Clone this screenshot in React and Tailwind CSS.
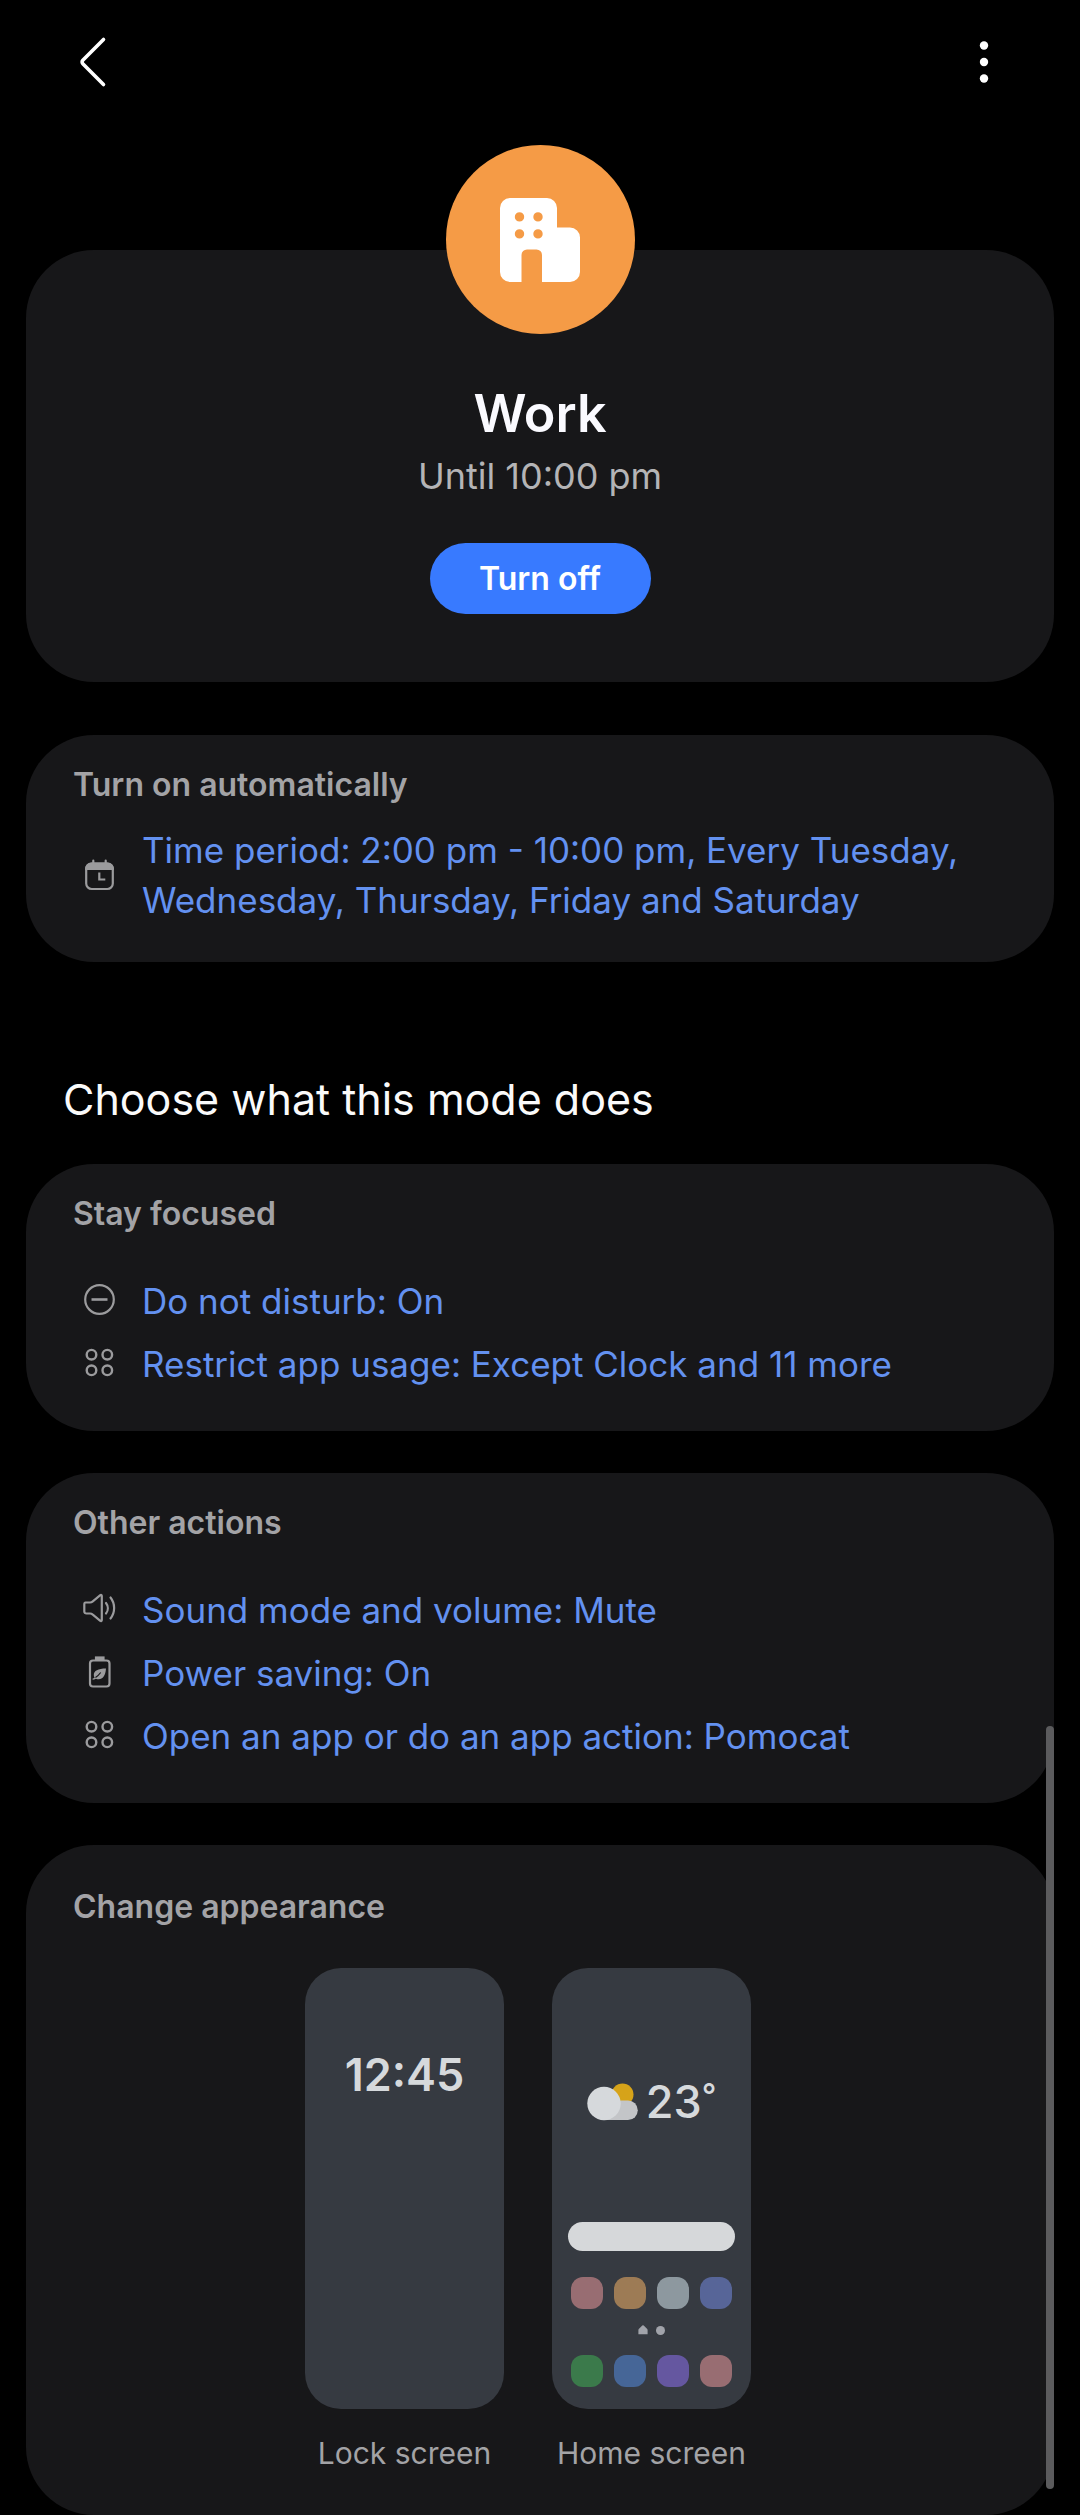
import React, { useState } from 'react';

const CalendarIcon = () => (
    <svg viewBox="0 0 36 36" className="h-9 w-9" fill="none" stroke="currentColor" strokeWidth="2.2" aria-hidden="true">
        <rect x="5.200" y="6.700" width="26.600" height="25.300" rx="5.500" />
        <path d="M4.100 13V11.500a6 6 0 0 1 6-6h16.800a6 6 0 0 1 6 6V13z" fill="currentColor" stroke="none" />
        <path d="M12.300 3.700v3M24.700 3.700v3" strokeLinecap="round" />
        <path d="M18.300 15.500v7h6" />
    </svg>
);

const MinusCircleIcon = () => (
    <svg viewBox="0 0 36 36" className="h-9 w-9" fill="none" stroke="currentColor" strokeWidth="2.2" aria-hidden="true">
        <circle cx="18.500" cy="16.500" r="14.300" />
        <path d="M10.500 16.500h16" strokeWidth="2.600" />
    </svg>
);

const AppsIcon = () => (
    <svg viewBox="0 0 36 36" className="h-9 w-9" fill="none" stroke="currentColor" strokeWidth="2.400" aria-hidden="true">
        <circle cx="10.500" cy="8.700" r="4.800" />
        <circle cx="26.300" cy="8.700" r="4.800" />
        <circle cx="10.500" cy="24.300" r="4.800" />
        <circle cx="26.300" cy="24.300" r="4.800" />
    </svg>
);

const SoundIcon = () => (
    <svg viewBox="0 0 36 36" className="h-9 w-9" fill="none" stroke="currentColor" strokeWidth="2.2" strokeLinejoin="round" strokeLinecap="round" aria-hidden="true">
        <path d="M4.500 10.500h4.500c1 0 2-.5 2.800-1.200L19.300 3.200c.7-.5 1.500-.2 1.500.7v24.200c0 .9-.8 1.200-1.500.7l-7.500-6.100c-.8-.7-1.800-1.200-2.800-1.200H5.500c-1.300 0-2.200-.8-2.200-2v-7c0-1.200.5-2 1.200-2z" />
        <path d="M25 11a8.500 8.500 0 0 1 0 10.500" />
        <path d="M29.500 5.500a17 17 0 0 1 0 21" />
    </svg>
);

const BatteryIcon = () => (
    <svg viewBox="0 0 36 36" className="h-9 w-9" fill="none" stroke="currentColor" strokeWidth="2.2" aria-hidden="true">
        <rect x="9" y="5.500" width="19.500" height="26" rx="3" />
        <path d="M15 2.200h7.500v3.300H15z" fill="currentColor" stroke="none" />
        <path d="M15 2.500h7.500v2H15z" fill="currentColor" />
        <path d="M25 13.500c-8 0-12.200 2.200-12.200 6.500 0 1.200.3 2 .8 2.700-.7.400-1.300.7-2 .8v1.300c1.200-.1 2.200-.5 3.300-1.100 5.500 2 9.500-1.500 10.100-10.200z" fill="currentColor" stroke="none" />
        <path d="M14.500 22.500c2-1.200 3.500-2.700 5.200-5" stroke="#171719" strokeWidth="1.200" />
    </svg>
);

const BuildingIcon = () => (
    <svg viewBox="0 0 80 84" className="h-[84px] w-20" aria-hidden="true">
        <path
            fill="#fff"
            fillRule="evenodd"
            d="M10 0h37a10 10 0 0 1 10 10v19.500h13a10 10 0 0 1 10 10V74a10 10 0 0 1-10 10H42V57a5.500 5.500 0 0 0-5.500-5.500h-9.500A5.500 5.500 0 0 0 21.500 57v27H10A10 10 0 0 1 0 74V10A10 10 0 0 1 10 0z
               M19.500 14.200a4.700 4.700 0 1 0 0 9.400a4.700 4.700 0 1 0 0-9.400z
               M38 14.200a4.700 4.700 0 1 0 0 9.400a4.700 4.700 0 1 0 0-9.400z
               M19.500 31.200a4.700 4.700 0 1 0 0 9.400a4.700 4.700 0 1 0 0-9.400z
               M38 31.200a4.700 4.700 0 1 0 0 9.400a4.700 4.700 0 1 0 0-9.400z"
        />
    </svg>
);

const WeatherIcon = () => (
    <svg viewBox="0 0 51 38" className="h-[38px] w-[51px]" aria-hidden="true">
        <circle cx="35.500" cy="11.500" r="11" fill="#d6a319" />
        <path d="M17 37V22l17-4.500h7a9.750 9.750 0 0 1 0 19.500z" fill="#c3c5c8" />
        <circle cx="17" cy="20.500" r="16.700" fill="#d6d9dc" />
    </svg>
);

const Section = ({ title, children }) => (
    <section className="mt-[42px] rounded-[68px] bg-[#171719] px-[47px] pt-[30px] pb-[42px]">
        <h3 className="text-[32px] leading-10 font-semibold text-[#a3a3a6]">{title}</h3>
        <div className="mt-[42px] flex flex-col gap-[13px]">{children}</div>
    </section>
);

const ActionRow = ({ icon: Icon, children }) => (
    <button type="button" className="ml-2 flex cursor-pointer items-center gap-[25px] text-left">
        <span className="shrink-0 text-[#9b9b9d]"><Icon /></span>
        <span className="text-[35px] leading-[50px] text-[#6391f0]">{children}</span>
    </button>
);

const ScreenPreview = ({ label, children }) => (
    <button type="button" className="flex cursor-pointer flex-col items-center">
        <span className="flex h-[441px] w-[199px] flex-col items-center rounded-[36px] bg-[#363a41]">
            {children}
        </span>
        <span className="mt-6 text-[30px] leading-10 text-[#a3a3a6]">{label}</span>
    </button>
);

const homeApps = ['bg-[#986d72]', 'bg-[#9d7b55]', 'bg-[#8d989f]', 'bg-[#576598]'];
const dockApps = ['bg-[#3b7a4b]', 'bg-[#466697]', 'bg-[#6557a0]', 'bg-[#986d72]'];

const AppGrid = ({ apps }) => (
    <span className="flex gap-[11px]">
        {apps.map((color) => (
            <span key={color} className={`${color} h-8 w-8 rounded-[12px]`} />
        ))}
    </span>
);

function App() {
    const [active, setActive] = useState(true);

    return (
        <div className="relative min-h-screen bg-black font-['Inter','Roboto',sans-serif]">
            <header className="flex h-[123px] items-center justify-between px-[72px]">
                <button type="button" aria-label="Back" className="cursor-pointer">
                    <svg viewBox="0 0 40 52" className="h-[52px] w-10" fill="none" stroke="#fff" strokeWidth="3.600" strokeLinecap="round" strokeLinejoin="round">
                        <path d="M31.500 3.500L10.800 24.300a2.400 2.400 0 0 0 0 3.400L31.500 48.500" />
                    </svg>
                </button>
                <button type="button" aria-label="More options" className="cursor-pointer">
                    <svg viewBox="0 0 48 48" className="h-12 w-12" fill="#fff">
                        <circle cx="24" cy="7.500" r="4.200" />
                        <circle cx="24" cy="24" r="4.200" />
                        <circle cx="24" cy="40.500" r="4.200" />
                    </svg>
                </button>
            </header>

            <main className="px-[26px]">
                <section className="mt-[127px] flex flex-col items-center rounded-[68px] bg-[#171719] pb-[68px]">
                    <div className="-mt-[105px] flex h-[189px] w-[189px] items-center justify-center rounded-full bg-[#f59b46]">
                        <BuildingIcon />
                    </div>
                    <h1 className="mt-12 text-[52px] leading-[64px] font-semibold text-[#fafaff]">Work</h1>
                    <p className="mt-1.5 text-[36px] leading-[48px] text-[#b4b4b6]">Until 10:00 pm</p>
                    <button
                        type="button"
                        onClick={() => setActive(!active)}
                        className="mt-[43px] h-[71px] w-[221px] cursor-pointer rounded-full bg-[#387aff] text-[32px] leading-10 font-semibold text-white"
                    >
                        {active ? 'Turn off' : 'Turn on'}
                    </button>
                </section>

                <section className="mt-[53px] rounded-[68px] bg-[#171719] px-[47px] pt-[30px] pb-[37px]">
                    <h3 className="text-[32px] leading-10 font-semibold text-[#a3a3a6]">Turn on automatically</h3>
                    <div className="mt-5 flex flex-col">
                        <ActionRow icon={CalendarIcon}>
                            Time period: 2:00 pm - 10:00 pm, Every Tuesday, Wednesday, Thursday, Friday and Saturday
                        </ActionRow>
                    </div>
                </section>

                <h2 className="mt-[107px] -mb-[7px] px-[37px] text-[43px] leading-[60px] text-[#fafafa]">Choose what this mode does</h2>

                <Section title="Stay focused">
                    <ActionRow icon={MinusCircleIcon}>Do not disturb: On</ActionRow>
                    <ActionRow icon={AppsIcon}>Restrict app usage: Except Clock and 11 more</ActionRow>
                </Section>

                <Section title="Other actions">
                    <ActionRow icon={SoundIcon}>Sound mode and volume: Mute</ActionRow>
                    <ActionRow icon={BatteryIcon}>Power saving: On</ActionRow>
                    <ActionRow icon={AppsIcon}>Open an app or do an app action: Pomocat</ActionRow>
                </Section>

                <section className="mt-[42px] rounded-[68px] bg-[#171719] px-[47px] pt-[42px] pb-[42px]">
                    <h3 className="text-[32px] leading-10 font-semibold text-[#a3a3a6]">Change appearance</h3>
                    <div className="mt-[41px] flex justify-center gap-12 pr-6">
                        <ScreenPreview label="Lock screen">
                            <span className="mt-[77px] text-[45px] leading-[60px] font-semibold text-[#d6d9dc]">12:45</span>
                        </ScreenPreview>
                        <ScreenPreview label="Home screen">
                            <span className="mt-[104px] flex items-center gap-2 text-[#d6d9dc]">
                                <WeatherIcon />
                                <span className="flex items-start font-medium">
                                    <span className="text-[45px] leading-[60px]">23</span>
                                    <span className="text-[32px] leading-[48px]">°</span>
                                </span>
                            </span>
                            <span className="mt-[90px] h-[29px] w-[167px] rounded-full bg-[#d6d8da]" />
                            <span className="mt-[26px]"><AppGrid apps={homeApps} /></span>
                            <span className="mt-4 mb-5 flex h-[10px] items-center gap-2 text-[#a1a3aa]">
                                <svg viewBox="0 0 10 10" className="h-[10px] w-[10px]" fill="currentColor" aria-hidden="true">
                                    <path d="M5 .3a1 1 0 0 1 .7.3L9.200 4a1.500 1.500 0 0 1 .4 1v4.200H.4V5a1.500 1.500 0 0 1 .4-1L4.300.6A1 1 0 0 1 5 .3z" />
                                </svg>
                                <span className="h-[9px] w-[9px] rounded-full bg-current" />
                            </span>
                            <AppGrid apps={dockApps} />
                        </ScreenPreview>
                    </div>
                </section>
            </main>

            {/* scroll indicator */}
            <div className="fixed right-[26px] bottom-[26px] h-[763px] w-2 rounded-full bg-[#5b5b5d]" />
        </div>
    );
}

export default App;
